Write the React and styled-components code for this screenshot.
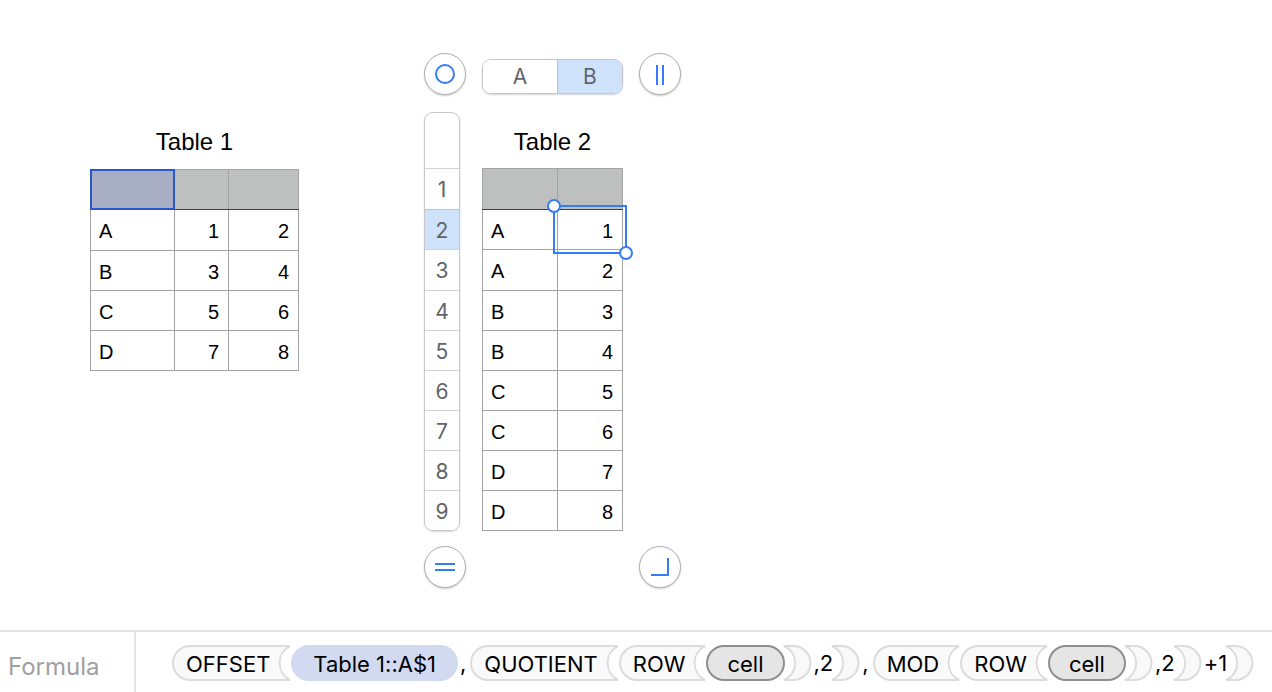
import React from "react";
import styled, { createGlobalStyle, css } from "styled-components";

const GlobalStyle = createGlobalStyle`
  * {
    box-sizing: border-box;
  }

  body {
    margin: 0;
    background: #fff;
    color: #000;
    font-family: Inter, Roboto, sans-serif;
    font-feature-settings: "calt" 0;
  }

  button {
    margin: 0;
    padding: 0;
    border: 0;
    font: inherit;
    font-feature-settings: inherit;
    color: inherit;
    cursor: pointer;
  }
`;

const Page = styled.div`
  display: flex;
  flex-direction: column;
  min-height: 100vh;
`;

const Sheet = styled.main`
  flex: 1;
  display: flex;
  align-items: flex-start;
  gap: 125px;
  padding: 53px 90px 40px;
`;

const TableBlock = styled.div`
  padding-top: 59px;
`;

const Table = styled.table`
  border-collapse: collapse;
  table-layout: fixed;
  width: ${(props) => props.$width}px;
  font-family: "Liberation Sans", Arial, sans-serif;
  font-size: 20px;
  line-height: 24px;
`;

const Caption = styled.caption`
  height: ${(props) => props.$height}px;
  padding-top: 16px;
  font-size: 24px;
  line-height: 28px;
  white-space: nowrap;
`;

const Row = styled.tr`
  height: ${(props) => (props.$tall ? 41 : 40)}px;
`;

const HeadCell = styled.th`
  position: relative;
  width: ${(props) => props.$width}px;
  padding: 0;
  border: 1px solid #a3a3a3;
  border-bottom-color: #3f3f3f;
  background: #bdc0bf;
`;

const Cell = styled.td`
  position: relative;
  padding: 2px 9px 0 8px;
  border: 1px solid #a3a3a3;
  text-align: ${(props) => (props.$number ? "right" : "left")};
`;

const ReferencedArea = styled.span`
  position: absolute;
  inset: -1px;
  border: 2px solid #2a56d0;
  background: #a8aec3;
`;

const Selection = styled.span`
  position: absolute;
  inset: -5px;
  border: 2px solid #357cf7;
  pointer-events: none;
`;

const Grip = styled.span`
  position: absolute;
  width: 14px;
  height: 14px;
  border: 2px solid #357cf7;
  border-radius: 50%;
  background: #fff;
  ${(props) =>
    props.$end
      ? css`
          right: -8px;
          bottom: -8px;
        `
      : css`
          left: -8px;
          top: -8px;
        `}
`;

const Frame = styled.div`
  display: grid;
  grid-template-columns: 42px auto 42px;
  grid-template-rows: 44px auto 42px;
  gap: 15px 16px;
`;

const RoundButton = styled.button`
  width: 42px;
  height: 42px;
  border: 1px solid #b0b0b0;
  border-radius: 50%;
  background: #fff;
  box-shadow: 0 1px 2px rgba(0, 0, 0, 0.2);
  color: #357cf7;

  svg {
    display: block;
    margin: auto;
  }
`;

const ColumnBar = styled.div`
  display: flex;
  align-self: center;
  height: 35px;
  margin-top: 2px;
  border: 1px solid #c6c6c6;
  border-radius: 9px;
  box-shadow: 0 1px 2px rgba(0, 0, 0, 0.16);
  overflow: hidden;
`;

const HeaderButton = styled.button`
  padding-top: 2px;
  background: ${(props) => (props.$active ? "#cfe2fc" : "#fff")};
  color: #636468;
  font-size: 21px;
  line-height: 26px;
`;

const ColumnButton = styled(HeaderButton)`
  flex: ${(props) => props.$width} 1 0;

  & + & {
    border-left: 1px solid #b4c4da;
  }
`;

const RowBar = styled.div`
  display: flex;
  flex-direction: column;
  width: 36px;
  border: 1px solid #c6c6c6;
  border-radius: 9px;
  box-shadow: 0 1px 2px rgba(0, 0, 0, 0.16);
  overflow: hidden;
`;

const RowButton = styled(HeaderButton)`
  height: ${(props) => (props.$tall ? 41 : 40)}px;
  border-top: 1px solid ${(props) => (props.$active ? "#b4c4da" : "#d2d2d2")};
`;

const RowBarTop = styled.div`
  height: 55px;
`;

const FormulaBar = styled.footer`
  display: flex;
  height: 62px;
  border-top: 2px solid #e4e4e4;
`;

const FormulaLabel = styled.div`
  width: 136px;
  padding: 20px 0 0 8px;
  border-right: 2px solid #e4e4e4;
  color: #a0a0a0;
  font-size: 24px;
  line-height: 30px;
`;

const Tokens = styled.div`
  display: flex;
  align-items: center;
  height: 36px;
  margin: 13px 0 0 36px;
  font-size: 22px;
  line-height: 28px;
  white-space: nowrap;
`;

const FunctionToken = styled.span`
  display: flex;
`;

const FunctionName = styled.span`
  height: 36px;
  padding: 3px 8px 0 12px;
  border: 2px solid #dcdcdc;
  border-right: 0;
  border-radius: 18px 0 0 18px;
  background: #f9f9f9;
`;

const Edge = styled.svg`
  display: block;
  flex: none;
  fill: #f9f9f9;
  stroke: none;
`;

const CloseEdge = styled(Edge)`
  margin-left: -2px;
`;

const ReferenceToken = styled.button`
  height: 36px;
  padding: 2px 22px 0;
  border-radius: 18px;
  background: #d1daf0;
`;

const ArgumentToken = styled.button`
  height: 36px;
  padding: 2px 19px 0;
  border: 2px solid #8f8f8f;
  border-radius: 18px;
  background: #e5e5e5;
`;

const Plain = styled.span`
  padding: 0 ${(props) => props.$after || 0}px 0 2px;
`;

const lettersTable1 = [
  ["A", 1, 2],
  ["B", 3, 4],
  ["C", 5, 6],
  ["D", 7, 8],
];

const lettersTable2 = [
  ["A", 1],
  ["A", 2],
  ["B", 3],
  ["B", 4],
  ["C", 5],
  ["C", 6],
  ["D", 7],
  ["D", 8],
];

const Func = ({ name }) => (
  <FunctionToken>
    <FunctionName>{name}</FunctionName>
    <Edge width="13" height="36" viewBox="0 0 13 36" aria-hidden="true">
      <path d="M0 1H13A17.5 17.5 0 0 0 13 35H0Z" />
      <path
        d="M0 1H12A19 19 0 0 0 12 35H0"
        fill="none"
        stroke="#dcdcdc"
        strokeWidth="2"
        strokeLinejoin="bevel"
      />
    </Edge>
  </FunctionToken>
);

const Close = () => (
  <CloseEdge width="29" height="36" viewBox="0 0 29 36" aria-hidden="true">
    <path
      d="M1 1H10.5A17 17 0 0 1 10.5 35H1A18.5 18.5 0 0 0 1 1Z"
      stroke="#dcdcdc"
      strokeWidth="2"
      strokeLinejoin="bevel"
    />
  </CloseEdge>
);

const HandleIcon = ({ d }) => (
  <svg width="22" height="22" viewBox="0 0 22 22" aria-hidden="true">
    <path d={d} fill="none" stroke="currentColor" strokeWidth="2" />
  </svg>
);

const SourceTable = () => (
  <TableBlock>
    <Table $width={209}>
      <Caption $height={57}>Table 1</Caption>
      <thead>
        <Row>
          <HeadCell $width={84}>
            <ReferencedArea />
          </HeadCell>
          <HeadCell $width={54} />
          <HeadCell $width={70} />
        </Row>
      </thead>
      <tbody>
        {lettersTable1.map(([letter, first, second], i) => (
          <Row key={letter} $tall={i === 0}>
            <Cell>{letter}</Cell>
            <Cell $number>{first}</Cell>
            <Cell $number>{second}</Cell>
          </Row>
        ))}
      </tbody>
    </Table>
  </TableBlock>
);

const ResultTable = () => (
  <Table $width={141}>
    <Caption $height={56}>Table 2</Caption>
    <thead>
      <Row $tall>
        <HeadCell $width={75} />
        <HeadCell $width={65} />
      </Row>
    </thead>
    <tbody>
      {lettersTable2.map(([letter, value], i) => (
        <Row key={value} $tall={i === 1}>
          <Cell>{letter}</Cell>
          <Cell $number>
            {value}
            {i === 0 && (
              <Selection>
                <Grip />
                <Grip $end />
              </Selection>
            )}
          </Cell>
        </Row>
      ))}
    </tbody>
  </Table>
);

const App = () => {
  return (
    <Page>
      <GlobalStyle />
      <Sheet>
        <SourceTable />
        <Frame>
          <RoundButton aria-label="Move table">
            <svg width="22" height="22" viewBox="0 0 22 22" aria-hidden="true">
              <circle
                cx="11"
                cy="11"
                r="9"
                fill="none"
                stroke="currentColor"
                strokeWidth="2"
              />
            </svg>
          </RoundButton>
          <ColumnBar>
            <ColumnButton $width={75}>A</ColumnButton>
            <ColumnButton $width={65} $active>
              B
            </ColumnButton>
          </ColumnBar>
          <RoundButton aria-label="Add column">
            <HandleIcon d="M8 2V22M14 2V22" />
          </RoundButton>
          <RowBar>
            <RowBarTop />
            {[1, 2, 3, 4, 5, 6, 7, 8, 9].map((n) => (
              <RowButton key={n} $tall={n === 1 || n === 3} $active={n === 2}>
                {n}
              </RowButton>
            ))}
          </RowBar>
          <ResultTable />
          <span />
          <RoundButton aria-label="Add row">
            <HandleIcon d="M1 8H21M1 14H21" />
          </RoundButton>
          <span />
          <RoundButton aria-label="Resize table">
            <HandleIcon d="M2 19H19V2" />
          </RoundButton>
        </Frame>
      </Sheet>
      <FormulaBar>
        <FormulaLabel>Formula</FormulaLabel>
        <Tokens>
          <Func name="OFFSET" />
          <ReferenceToken>Table 1::A$1</ReferenceToken>
          <Plain $after={4}>,</Plain>
          <Func name="QUOTIENT" />
          <Func name="ROW" />
          <ArgumentToken>cell</ArgumentToken>
          <Close />
          <Plain>,2</Plain>
          <Close />
          <Plain $after={4}>,</Plain>
          <Func name="MOD" />
          <Func name="ROW" />
          <ArgumentToken>cell</ArgumentToken>
          <Close />
          <Plain>,2</Plain>
          <Close />
          <Plain>+1</Plain>
          <Close />
        </Tokens>
      </FormulaBar>
    </Page>
  );
};

export default App;
